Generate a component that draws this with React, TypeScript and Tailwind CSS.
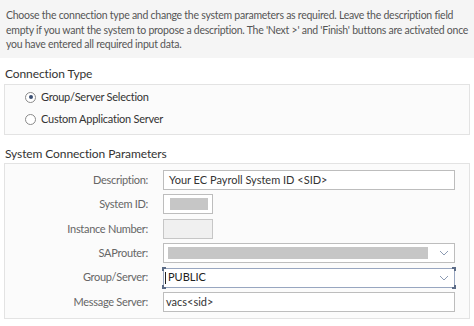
const Chevron = () => (
  <svg width="10" height="6" viewBox="0 0 10 6" className="shrink-0">
    <path d="M1 1 L5 5 L9 1" fill="none" stroke="#8c9bb3" strokeWidth="1" />
  </svg>
)

const Radio = ({ checked, label }: { checked?: boolean; label: string }) => (
  <div className="flex items-center h-[22px]">
    <span className="ml-[20px] w-[11px] h-[11px] rounded-full border border-[#8a8a8a] bg-white flex items-center justify-center">
      {checked && <span className="w-[4px] h-[4px] rounded-full bg-[#3a4f73]" />}
    </span>
    <span className="ml-[5px] text-[11px] tracking-[-0.25px] text-[#333]">{label}</span>
  </div>
)

const Row = ({ label, children }: { label: string; children: React.ReactNode }) => (
  <div className="flex items-center h-[20px]">
    <div className="w-[143px] text-right text-[11px] tracking-[-0.3px] text-[#666]">{label}</div>
    <div className="ml-[15px] flex-1 flex h-full">{children}</div>
  </div>
)

const Corner = ({ pos }: { pos: string }) => (
  <span className={`absolute w-[4px] h-[4px] border-[#5b6b86] ${pos}`} />
)

export default function App() {
  return (
    <div className="w-[474px] h-[326px] overflow-hidden bg-white font-['Lato','Liberation_Sans',sans-serif]">
      <div className="h-[58px] bg-[#f5f5f5] pl-[6px] pr-[1px] pt-[8px] text-[10.5px] tracking-[-0.25px] leading-[14.5px] text-[#555]">
        Choose the connection type and change the system parameters as required. Leave the description field empty if you want the system to propose a description. The 'Next &gt;' and 'Finish' buttons are activated once you have entered all required input data.
      </div>

      <div className="mt-[8px] h-[16px] leading-[16px] pl-[5px] text-[12px] tracking-[-0.1px] text-[#333]">Connection Type</div>
      <div className="mt-[2px] ml-[4px] mr-[4px] h-[51px] border border-[#e3e3e3] bg-[#fbfbfb] pt-[1px]">
        <Radio checked label="Group/Server Selection" />
        <Radio label="Custom Application Server" />
      </div>

      <div className="mt-[11px] h-[16px] leading-[16px] pl-[5px] text-[12px] tracking-[-0.1px] text-[#333]">System Connection Parameters</div>
      <div className="mt-[1px] ml-[4px] mr-[4px] h-[156px] border border-[#e3e3e3] bg-[#fbfbfb] pt-[6px] pr-[14px] flex flex-col gap-[4.4px]">
        <Row label="Description:">
          <div className="flex-1 border border-[#bdbdbd] bg-white flex items-center pl-[5px] text-[11px] text-[#333]">
            Your EC Payroll System ID &lt;SID&gt;
          </div>
        </Row>
        <Row label="System ID:">
          <div className="w-[50px] border border-[#bdbdbd] bg-white flex items-center pl-[6px]">
            <div className="w-[38px] h-[12px] bg-[#c6c6c6]" />
          </div>
        </Row>
        <Row label="Instance Number:">
          <div className="w-[50px] border border-[#c6c6c6] bg-[#f0f0f0]" />
        </Row>
        <Row label="SAProuter:">
          <div className="flex-1 border border-[#bdbdbd] bg-white flex items-center pl-[4px] pr-[5px]">
            <div className="flex-1 h-[12px] bg-[#c6c6c6]" />
            <div className="ml-[11px]">
              <Chevron />
            </div>
          </div>
        </Row>
        <Row label="Group/Server:">
          <div className="relative flex-1 border border-[#98a6c0] bg-white flex items-center pl-[1px] pr-[5px] text-[11px] text-[#222]">
            <span className="w-px h-[12px] bg-[#222] mr-[2px]" />
            <span className="flex-1">PUBLIC</span>
            <Chevron />
            <Corner pos="-left-[2px] -top-[2px] border-l-2 border-t-2" />
            <Corner pos="-right-[2px] -top-[2px] border-r-2 border-t-2" />
            <Corner pos="-left-[2px] -bottom-[2px] border-l-2 border-b-2" />
            <Corner pos="-right-[2px] -bottom-[2px] border-r-2 border-b-2" />
          </div>
        </Row>
        <Row label="Message Server:">
          <div className="flex-1 border border-[#bdbdbd] bg-white flex items-center pl-[2px] text-[11px] text-[#333]">
            vacs&lt;sid&gt;
          </div>
        </Row>
      </div>
    </div>
  )
}
